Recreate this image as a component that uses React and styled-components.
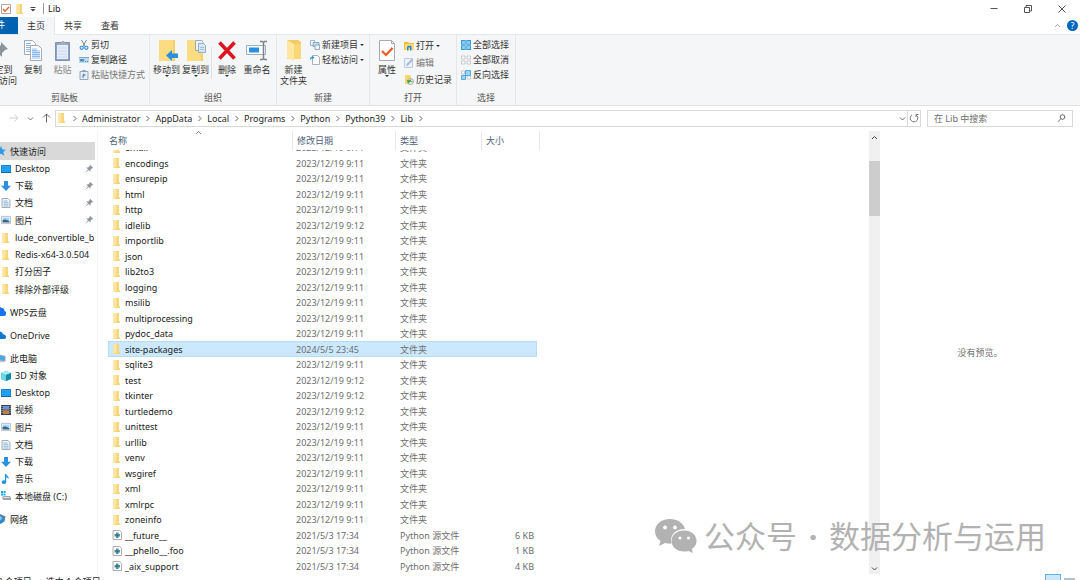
import React from "react";
import styled, { createGlobalStyle } from "styled-components";

const breadcrumbs = [
  "Administrator",
  "AppData",
  "Local",
  "Programs",
  "Python",
  "Python39",
  "Lib"
];

const folderNames = [
  "email",
  "encodings",
  "ensurepip",
  "html",
  "http",
  "idlelib",
  "importlib",
  "json",
  "lib2to3",
  "logging",
  "msilib",
  "multiprocessing",
  "pydoc_data",
  "site-packages",
  "sqlite3",
  "test",
  "tkinter",
  "turtledemo",
  "unittest",
  "urllib",
  "venv",
  "wsgiref",
  "xml",
  "xmlrpc",
  "zoneinfo"
];

const lateFolders = ["idlelib", "test", "tkinter", "turtledemo"];

const getFolderDate = name => {
  if (name === "site-packages") return "2024/5/5 23:45";
  return lateFolders.includes(name) ? "2023/12/19 9:12" : "2023/12/19 9:11";
};

const files = [
  ...folderNames.map(name => ({
    name,
    icon: "folder",
    date: getFolderDate(name),
    type: "文件夹",
    size: ""
  })),
  { name: "__future__", icon: "python", date: "2021/5/3 17:34", type: "Python 源文件", size: "6 KB" },
  { name: "__phello__.foo", icon: "python", date: "2021/5/3 17:34", type: "Python 源文件", size: "1 KB" },
  { name: "_aix_support", icon: "python", date: "2021/5/3 17:34", type: "Python 源文件", size: "4 KB" }
];

const navGroups = [
  {
    title: "快速访问",
    icon: "star",
    selected: true,
    items: [
      { name: "Desktop", icon: "desktop", pinned: true },
      { name: "下载", icon: "download", pinned: true },
      { name: "文档", icon: "document", pinned: true },
      { name: "图片", icon: "picture", pinned: true },
      { name: "lude_convertible_b", icon: "folder" },
      { name: "Redis-x64-3.0.504", icon: "folder" },
      { name: "打分因子", icon: "folder" },
      { name: "排除外部评级", icon: "folder" }
    ]
  },
  { title: "WPS云盘", icon: "wps", items: [] },
  { title: "OneDrive", icon: "onedrive", items: [] },
  {
    title: "此电脑",
    icon: "computer",
    items: [
      { name: "3D 对象", icon: "cube" },
      { name: "Desktop", icon: "desktop" },
      { name: "视频", icon: "video" },
      { name: "图片", icon: "picture" },
      { name: "文档", icon: "document" },
      { name: "下载", icon: "download" },
      { name: "音乐", icon: "music" },
      { name: "本地磁盘 (C:)", icon: "disk" }
    ]
  },
  { title: "网络", icon: "network", items: [] }
];

// 10x10 glyphs used in the tree, the list and the small ribbon buttons
const smallIcons = {
  folder: (
    <>
      <path d="M1.500 0h5.500v8l1 .5V10H1.500z" fill="#f7d57a" />
      <path d="M1.500 0h3v8.500L1.500 10z" fill="#fde6a2" />
    </>
  ),
  python: (
    <>
      <path d="M1 .5h6.500L9.500 2.500v7H1z" fill="#fff" stroke="#9a9a9a" strokeWidth=".8" />
      <path d="M4 2.500h2.500v1.500H8v2.500H6.500V8H4V6.500H2.500V4H4z" fill="#4a8fa8" />
      <path d="M4.500 4.500h1.500v1.500H4.500z" fill="#2d6482" />
    </>
  ),
  star: <path d="M5 0l1.500 3.500 3.500.2-2.700 2.300.9 3.700L5 7.700 1.800 9.700l.9-3.700L0 3.700l3.500-.2z" fill="#2f9be8" />,
  desktop: (
    <>
      <path d="M0 1h10v8H0z" fill="#1687d9" />
      <path d="M1 2h8v6H1z" fill="#21a1f3" />
      <path d="M0 8h10v1H0z" fill="#1468a8" />
    </>
  ),
  download: <path d="M3 0h4v4.800H10L5 10 0 4.800h3z" fill="#2e8ee0" />,
  document: (
    <>
      <path d="M1 .5h6L9 2.500v7H1z" fill="#eef4f8" stroke="#8b9aa5" strokeWidth=".8" />
      <path d="M2.500 3h4M2.500 4.700h5M2.500 6.300h5M2.500 8h5" stroke="#6aa5cf" strokeWidth=".7" />
    </>
  ),
  picture: (
    <>
      <path d="M.4 1.400h9.200v7.200H.4z" fill="#fff" stroke="#a9b3ba" strokeWidth=".8" />
      <path d="M1.500 2.500h7v3h-7z" fill="#a3d4f3" />
      <path d="M1.500 5l3-.5 4 1.500v1.500h-7z" fill="#31658a" />
    </>
  ),
  wps: <path d="M0 9V2.500a4 4 0 0 1 6-1.500c2 0 2.500 2 2.500 3 2.500.5 2 4.700-.5 5z" fill="#1672ed" />,
  onedrive: <path d="M0 9V2.500a4 3.500 0 0 1 7 1.700C10.500 4.500 11 8.500 8.500 9z" fill="#0f79cf" />,
  computer: (
    <>
      <path d="M0 1l9.500 2v5.500L0 7z" fill="#8fa6b5" />
      <path d="M0 2l8.500 1.600v3.600L0 6z" fill="#42aae9" />
      <path d="M2 8.200h6v1H2z" fill="#b4bcc2" />
    </>
  ),
  cube: (
    <>
      <path d="M5 0l5 2v6l-5 2-5-2V2z" fill="#27b1cb" />
      <path d="M5 0l5 2-5 2-5-2z" fill="#a5eef3" />
      <path d="M0 2l5 2v6L0 8z" fill="#6bd5e0" />
      <path d="M5 4l5-2v6l-5 2z" fill="#1389a6" />
    </>
  ),
  video: (
    <>
      <path d="M0 0h10v10H0z" fill="#3c4655" />
      <path d="M2 1h6v3.700H2z" fill="#6f94cb" />
      <path d="M2 5.300h6V9H2z" fill="#bd8048" />
      <path d="M1 1v8M9 1v8" stroke="#d6d9de" strokeDasharray="1 1" strokeWidth=".8" />
    </>
  ),
  music: <path d="M4 0h1.200c.3 2 3 2.300 2.500 5C7 3.700 6 3.500 5.200 3.300V8a2.200 1.800 0 1 1-1.200-1.500z" fill="#1f94e6" />,
  disk: (
    <>
      <path d="M0 0h2v2H0zM2.500 0h2v2h-2zM0 2.500h2v2H0zM2.500 2.500h2v2h-2z" fill="#18a7e8" />
      <path d="M1 6l2-1h6l1 2v2H2z" fill="#9ea5aa" />
      <path d="M2 6h6l1 1H3z" fill="#dde1e3" />
    </>
  ),
  network: (
    <>
      <path d="M4 0l5.500 2.500-1 5L4 10z" fill="#5b7fa0" />
      <circle cx="3.500" cy="5.500" r="4" fill="#2688ce" />
      <path d="M2 4l2.500-2 2 2-2 2.500z" fill="#82c9e9" />
    </>
  ),
  pin: <path d="M6 .7l3.300 3.300-1.300.3-1.500 1.500v2L4.700 6 1 9.300 4 5.300 2.200 3.500h2L5.700 2z" fill="#8d969e" />,
  scissors: (
    <>
      <path d="M2.500 0l3.700 6.500M7.500 0L3.800 6.500" stroke="#7d8790" strokeWidth="1" />
      <circle cx="2.700" cy="7.800" r="1.600" fill="none" stroke="#2c8dda" strokeWidth="1.100" />
      <circle cx="7.300" cy="7.800" r="1.600" fill="none" stroke="#2c8dda" strokeWidth="1.100" />
    </>
  ),
  path: (
    <>
      <path d="M0 2.500h10v5.500H0z" fill="#b7dcf4" />
      <path d="M0 2.500h10" stroke="#7aa9c8" />
      <path d="M1 4l1 2.500 1-2.500 1 2.500L5 4M6 6.500h1M8 6.500h1" fill="none" stroke="#376b94" strokeWidth=".8" />
    </>
  ),
  shortcut: (
    <>
      <path d="M1 1.500h8v8H1z" fill="#e5edf7" stroke="#8c9db8" strokeWidth=".9" />
      <path d="M3.500 0h3v2h-3z" fill="#8c9db8" />
      <path d="M4 8V5" stroke="#5e7fb5" fill="none" />
      <path d="M4 3.500l3 1.500-3 1.500z" fill="#5e7fb5" />
    </>
  ),
  newItem: (
    <>
      <path d="M.5.500h4v5h-4z" fill="#fff" stroke="#8fa0ab" strokeWidth=".8" />
      <path d="M3 2.500h6v4H3z" fill="#bfe2f5" stroke="#6c9cb9" strokeWidth=".8" />
      <path d="M5 5h4.500v4.500H5z" fill="#eef5f8" stroke="#879ba8" strokeWidth=".8" />
    </>
  ),
  easyAccess: (
    <>
      <path d="M2.500.5h5L9.500 2.500v7h-7z" fill="#fff" stroke="#949fa8" strokeWidth=".8" />
      <path d="M0 4.500c0-2 1-2.700 2.200-2.700V.7l2.300 1.800-2.300 1.800V3.200C1.300 3.200 1 3.600 1 4.500z" fill="#2c8fe0" />
    </>
  ),
  open: (
    <>
      <path d="M0 1h4l1 1h5v7H0z" fill="#f5bd3c" />
      <path d="M1 3h9v6H1z" fill="#fbdc79" />
      <path d="M3 9.500V6.500C3 5 4 4.700 5 4.700h2.500V9.500H6V6.500H4.500V9.500z" fill="#2b88cf" />
    </>
  ),
  edit: (
    <>
      <path d="M.5.500h8v9h-8z" fill="#edf1fa" stroke="#b4c1d7" strokeWidth=".8" />
      <path d="M2 8l.5-2L8 .5l1.500 1.300L4 7.500z" fill="#a7bad9" />
    </>
  ),
  history: (
    <>
      <path d="M1 0h5l1 1v8H1z" fill="#f8d66f" />
      <circle cx="6.500" cy="6.500" r="3" fill="#e8f2e5" stroke="#8f9f8f" strokeWidth=".8" />
      <path d="M2.500 5.500l2.500 3 1.500-3.500z" fill="#2aa335" />
      <path d="M6.500 4.500v2h2" stroke="#527b52" fill="none" strokeWidth=".8" />
    </>
  ),
  selectAll: (
    <>
      <path d="M0 0h4.700v4.700H0zM5.300 0H10v4.700H5.300zM0 5.300h4.700V10H0zM5.300 5.300H10V10H5.300z" fill="#319bdc" />
      <path d="M1 1h3v3H1zM6 1h3v3H6zM1 6h3v3H1zM6 6h3v3H6z" fill="#87caf4" />
    </>
  ),
  selectNone: (
    <path
      d="M.5 1h3.500v3H.5zM6 1h3.500v3H6zM.5 6h3.500v3H.5zM6 6h3.500v3H6z"
      fill="#fff"
      stroke="#b8bcc0"
      strokeWidth=".8"
    />
  ),
  invert: (
    <>
      <path d="M.5 1h3v3h-3zM6 6h3.500v3H6z" fill="#fff" stroke="#b8bcc0" strokeWidth=".8" />
      <path d="M4.500.5h5v5h-5zM.5 5.500h4v4h-4z" fill="#9bd3f7" stroke="#3a9de0" strokeWidth=".8" />
    </>
  )
};

// 22x22 glyphs for the tall ribbon buttons
const bigIcons = {
  pin: <path d="M13 2l7 7-3 1-3 3v4l-4-4-7 7 5-9-3-3h4l4-3z" fill="#8b949b" />,
  copy: (
    <>
      <path d="M2.500.5h8l3 3v11h-11z" fill="#fff" stroke="#a2aab2" />
      <path d="M4 3.500h5M4 5.500h7M4 7.500h7M4 9.500h7M4 11.500h7" stroke="#8fb8e8" />
      <path d="M8.500 5.500h8l3 3v12h-11z" fill="#fff" stroke="#a2aab2" />
      <path d="M10 8h5v2h3v9h-8z" fill="#c8dffa" />
      <path d="M10 10.500h5M10 12.500h8M10 14.500h8M10 16.500h8" stroke="#8fb8e8" />
    </>
  ),
  paste: (
    <>
      <path d="M3.500 2.500h14v18h-14z" fill="#8fa3c9" stroke="#8192b7" />
      <path d="M5 5h11v14H5z" fill="#e4edfa" />
      <path d="M7 3h2l1-2h2l1 2h2v2H7z" fill="#a6aeb8" />
      <path d="M6 8h9M6 11h9M6 14h9M6 17h9" stroke="#ccdaf0" />
    </>
  ),
  moveTo: (
    <>
      <path d="M3 0h16v21H3z" fill="#fbdc80" />
      <path d="M17 0h2v21h-2z" fill="#f4cf6b" />
      <path d="M10 15.500l6-5.500v3.500h6v4.500h-6V21z" fill="#2d8fdf" />
    </>
  ),
  copyTo: (
    <>
      <path d="M2 0h16v21H2z" fill="#fbdc80" />
      <path d="M16 14h2v7h-2z" fill="#f4cf6b" />
      <path d="M10.500.5h6l2 2v8h-8z" fill="#eaf3fd" stroke="#9aabbf" />
      <path d="M13.500 3.500h5l2 2v7h-7z" fill="#d6e6fa" stroke="#9aabbf" />
      <path d="M15 7.500h4M15 9.500h4" stroke="#9bbfea" />
    </>
  ),
  remove: <path d="M3.500 2.500l15 16M18.500 2.500l-15 16" stroke="#dc1420" strokeWidth="3.600" />,
  rename: (
    <>
      <path d="M.5 5.500h19v9H.5z" fill="#fff" stroke="#9fb2c0" />
      <path d="M3 7.500h10v5H3z" fill="#2c90e2" />
      <path d="M14 1.500h2.500l1 1 1-1H21M17.500 2v16M14 19.500h2.500l1-1 1 1H21" fill="none" stroke="#7b838a" strokeWidth="1.500" />
    </>
  ),
  newFolder: (
    <>
      <path d="M4 0h11l3 2v17H4z" fill="#f4cb61" />
      <path d="M4 0l7 4v17l-7-3z" fill="#ffe7a1" />
      <path d="M11 4h4l3-1v16h-7z" fill="#f9d777" />
    </>
  ),
  properties: (
    <>
      <path d="M3.500.5h12l3 3v17h-15z" fill="#fff" stroke="#aaa" />
      <path d="M15.500.5v3h3" fill="none" stroke="#aaa" />
      <path d="M6 11l4 4 6.500-7" fill="none" stroke="#ee5a24" strokeWidth="2.200" />
    </>
  )
};

const SmallIcon = ({ name }) => (
  <SmallSvg viewBox="0 0 10 10" aria-hidden="true">
    {smallIcons[name]}
  </SmallSvg>
);

const BigIcon = ({ name }) => (
  <BigSvg viewBox="0 0 22 22" aria-hidden="true">
    {bigIcons[name]}
  </BigSvg>
);

const chevrons = {
  right: "M3.500 2l2.500 2.500L3.500 7",
  down: "M2 3.500l2.500 2.500L7 3.500",
  up: "M2 6l2.500-2.500L7 6"
};

const Chevron = ({ dir, color = "#666" }) => (
  <ChevronSvg viewBox="0 0 9 9" aria-hidden="true">
    <path d={chevrons[dir]} fill="none" stroke={color} />
  </ChevronSvg>
);

const Big = ({ icon, lines, width, caret, muted }) => (
  <BigButton type="button" $width={width} $muted={muted}>
    <BigIcon name={icon} />
    <BigLabel>
      {lines.map(line => (
        <span key={line}>{line}</span>
      ))}
    </BigLabel>
    {caret && <Caret />}
  </BigButton>
);

const Small = ({ icon, label, caret, muted, tall }) => (
  <SmallButton type="button" $muted={muted} $tall={tall}>
    <SmallIcon name={icon} />
    {label}
    {caret && <Caret />}
  </SmallButton>
);

const TitleBar = () => (
  <TitleRow>
    <PlainButton type="button" aria-label="属性">
      <SmallSvg viewBox="0 0 10 10">
        <path d="M.5.500h9v9h-9z" fill="#fff" stroke="#b2a8a4" />
        <path d="M2 5l2 2.300L8 3" fill="none" stroke="#e8622e" strokeWidth="1.400" />
      </SmallSvg>
    </PlainButton>
    <PlainButton type="button" aria-label="新建文件夹">
      <SmallIcon name="folder" />
    </PlainButton>
    <PlainButton type="button" aria-label="自定义快速访问工具栏">
      <SmallSvg viewBox="0 0 10 10">
        <path d="M1.500 3.500h5" stroke="#444" />
        <path d="M1.500 5h5L4 7.500z" fill="#444" />
      </SmallSvg>
    </PlainButton>
    <Title>Lib</Title>
    <WindowButtons>
      <WindowButton type="button" aria-label="最小化">
        <SmallSvg viewBox="0 0 10 10">
          <path d="M1.500 4.500h7" stroke="#555" />
        </SmallSvg>
      </WindowButton>
      <WindowButton type="button" aria-label="还原">
        <SmallSvg viewBox="0 0 10 10">
          <path d="M1.500 3.500h5v5h-5zM3 3V1.500h5.500V7H7" fill="none" stroke="#555" />
        </SmallSvg>
      </WindowButton>
      <WindowButton type="button" aria-label="关闭">
        <SmallSvg viewBox="0 0 10 10">
          <path d="M1.500 1.500l7 7M8.500 1.500l-7 7" stroke="#555" />
        </SmallSvg>
      </WindowButton>
    </WindowButtons>
  </TitleRow>
);

const Tabs = () => (
  <TabRow>
    <FileTab type="button">文件</FileTab>
    <Tab type="button" $active>
      主页
    </Tab>
    <Tab type="button">共享</Tab>
    <Tab type="button">查看</Tab>
    <TabTools>
      <PlainButton type="button" aria-label="最小化功能区">
        <Chevron dir="up" color="#aaa" />
      </PlainButton>
      <HelpButton type="button" aria-label="帮助">
        ?
      </HelpButton>
    </TabTools>
  </TabRow>
);

const Ribbon = () => (
  <RibbonRow>
    <Group $width={170}>
      <GroupBody>
        <Big icon="pin" lines={["固定到", "快速访问"]} width={38} />
        <Big icon="copy" lines={["复制"]} width={30} />
        <Big icon="paste" lines={["粘贴"]} width={29} muted />
        <SmallColumn>
          <Small icon="scissors" label="剪切" />
          <Small icon="path" label="复制路径" />
          <Small icon="shortcut" label="粘贴快捷方式" muted />
        </SmallColumn>
      </GroupBody>
      <GroupLabel>剪贴板</GroupLabel>
    </Group>
    <Group $width={127}>
      <GroupBody>
        <Big icon="moveTo" lines={["移动到"]} width={29} caret />
        <Big icon="copyTo" lines={["复制到"]} width={29} caret />
        <Divider />
        <Big icon="remove" lines={["删除"]} width={30} caret />
        <Big icon="rename" lines={["重命名"]} width={30} />
      </GroupBody>
      <GroupLabel>组织</GroupLabel>
    </Group>
    <Group $width={93}>
      <GroupBody>
        <Big icon="newFolder" lines={["新建", "文件夹"]} width={29} />
        <SmallColumn>
          <Small icon="newItem" label="新建项目" caret />
          <Small icon="easyAccess" label="轻松访问" caret />
        </SmallColumn>
      </GroupBody>
      <GroupLabel>新建</GroupLabel>
    </Group>
    <Group $width={87}>
      <GroupBody>
        <Big icon="properties" lines={["属性"]} width={30} caret />
        <SmallColumn>
          <Small icon="open" label="打开" caret tall />
          <Small icon="edit" label="编辑" muted tall />
          <Small icon="history" label="历史记录" tall />
        </SmallColumn>
      </GroupBody>
      <GroupLabel>打开</GroupLabel>
    </Group>
    <Group $width={59}>
      <GroupBody>
        <SmallColumn>
          <Small icon="selectAll" label="全部选择" />
          <Small icon="selectNone" label="全部取消" />
          <Small icon="invert" label="反向选择" />
        </SmallColumn>
      </GroupBody>
      <GroupLabel>选择</GroupLabel>
    </Group>
  </RibbonRow>
);

const AddressBar = () => (
  <AddressRow>
    <HistoryButtons>
      <PlainButton type="button" aria-label="前进">
        <SmallSvg viewBox="0 0 10 10">
          <path d="M.5 5h8.500M5.500 1.500L9 5 5.500 8.500" fill="none" stroke="#d0d0d0" />
        </SmallSvg>
      </PlainButton>
      <PlainButton type="button" aria-label="最近浏览的位置">
        <Chevron dir="down" color="#777" />
      </PlainButton>
      <PlainButton type="button" aria-label="上移">
        <SmallSvg viewBox="0 0 10 10">
          <path d="M4.500 9.500V1M1 4.500L4.500 1 8 4.500" fill="none" stroke="#666" />
        </SmallSvg>
      </PlainButton>
    </HistoryButtons>
    <PathBox>
      <SmallIcon name="folder" />
      <CrumbArrow>
        <Chevron dir="right" />
      </CrumbArrow>
      {breadcrumbs.map(crumb => (
        <React.Fragment key={crumb}>
          <Crumb href="#">{crumb}</Crumb>
          <CrumbArrow>
            <Chevron dir="right" />
          </CrumbArrow>
        </React.Fragment>
      ))}
      <PathTools>
        <PlainButton type="button" aria-label="以前的位置">
          <Chevron dir="down" />
        </PlainButton>
        <RefreshButton type="button" aria-label="刷新">
          <SmallSvg viewBox="0 0 10 10">
            <path d="M3 1.800a3.800 3.800 0 1 0 4 0M7 4V1.500h2.500" fill="none" stroke="#777" />
          </SmallSvg>
        </RefreshButton>
      </PathTools>
    </PathBox>
    <SearchBox>
      <SearchInput type="text" placeholder="在 Lib 中搜索" aria-label="在 Lib 中搜索" />
      <SmallSvg viewBox="0 0 10 10">
        <circle cx="5.500" cy="4" r="2.300" fill="none" stroke="#666" />
        <path d="M3.800 5.800L1 8.700" stroke="#666" />
      </SmallSvg>
    </SearchBox>
  </AddressRow>
);

const Navigation = () => (
  <Nav>
    {navGroups.map(group => (
      <NavList key={group.title}>
        <NavItem>
          <NavLink href="#" $root $selected={group.selected}>
            <SmallIcon name={group.icon} />
            <NavText>{group.title}</NavText>
          </NavLink>
        </NavItem>
        {group.items.map(item => (
          <NavItem key={item.name}>
            <NavLink href="#">
              <SmallIcon name={item.icon} />
              <NavText>{item.name}</NavText>
              {item.pinned && <SmallIcon name="pin" />}
            </NavLink>
          </NavItem>
        ))}
      </NavList>
    ))}
  </Nav>
);

const FileList = () => (
  <FileTable>
    <FileHead>
      <HeadRow>
        <HeadCell scope="col" $first>
          名称
          <SortMark>
            <Chevron dir="up" color="#888" />
          </SortMark>
        </HeadCell>
        <HeadCell scope="col">修改日期</HeadCell>
        <HeadCell scope="col">类型</HeadCell>
        <HeadCell scope="col">大小</HeadCell>
      </HeadRow>
    </FileHead>
    <FileBody>
      {files.map(file => (
        <FileRow key={file.name} $selected={file.name === "site-packages"}>
          <NameCell>
            <SmallIcon name={file.icon} />
            {file.name}
          </NameCell>
          <Cell>{file.date}</Cell>
          <Cell>{file.type}</Cell>
          <SizeCell>{file.size}</SizeCell>
        </FileRow>
      ))}
    </FileBody>
  </FileTable>
);

const Watermark = () => (
  <WatermarkBox>
    <WechatSvg viewBox="0 0 42 34" aria-hidden="true">
      <path d="M15 0C6 0 0 5.500 0 12.500c0 4 2 7 5.500 9.500L4 27l6-3c2 .5 4 .8 6.500.6C14 16 21 10 30 10 28.500 4 22.500 0 15 0z" fill="#b2b2b2" />
      <path d="M29 11.500c-7 0-12.500 4.500-12.500 10.500S22 32.500 29 32.500c1.500 0 3-.2 4.500-.6L38 34l-1.200-4c2.800-2 4.700-4.600 4.700-8 0-6-5.500-10.500-12.500-10.500z" fill="#b2b2b2" />
      <g fill="#fff">
        <circle cx="10" cy="8.500" r="1.900" />
        <circle cx="20" cy="8.500" r="1.900" />
        <circle cx="25" cy="19" r="1.600" />
        <circle cx="33.500" cy="19" r="1.600" />
      </g>
    </WechatSvg>
    <span>公众号</span>
    <WatermarkDot>·</WatermarkDot>
    <span>数据分析与运用</span>
  </WatermarkBox>
);

const App = () => (
  <Shell>
    <GlobalStyle />
    <TitleBar />
    <Tabs />
    <Ribbon />
    <AddressBar />
    <Main>
      <Navigation />
      <FileList />
      <ScrollTrack>
        <ScrollButton type="button" aria-label="向上滚动">
          <Chevron dir="up" color="#444" />
        </ScrollButton>
        <ScrollThumb />
        <ScrollButton type="button" aria-label="向下滚动">
          <Chevron dir="down" color="#444" />
        </ScrollButton>
      </ScrollTrack>
      <Preview>没有预览。</Preview>
    </Main>
    <StatusBar>
      <span>208 个项目</span>
      <span>选中 1 个项目</span>
      <ViewButtons>
        <ViewButton type="button" aria-label="详细信息" $active />
        <ViewButton type="button" aria-label="大图标" />
      </ViewButtons>
    </StatusBar>
    <Watermark />
  </Shell>
);

export default App;

const GlobalStyle = createGlobalStyle`
  * {
    box-sizing: border-box;
  }
  body {
    margin: 0;
    overflow: hidden;
    background: #fff;
    color: #1a1a1a;
    font-family: "Noto Sans", "Noto Sans CJK SC", sans-serif;
    font-size: 9px;
    line-height: 11px;
  }
  button, input {
    margin: 0;
    padding: 0;
    border: 0;
    background: none;
    color: inherit;
    font: inherit;
  }
  a {
    color: inherit;
    text-decoration: none;
  }
`;

// the window hangs 20px over the left edge of the screen
const Shell = styled.div`
  position: relative;
  display: flex;
  flex-direction: column;
  height: 100vh;
  margin-left: -20px;
  white-space: nowrap;
`;

const SmallSvg = styled.svg`
  flex: none;
  display: block;
  width: 10px;
  height: 10px;
`;

const BigSvg = styled.svg`
  flex: none;
  width: 22px;
  height: 22px;
`;

const ChevronSvg = styled.svg`
  flex: none;
  display: block;
  width: 9px;
  height: 9px;
`;

const PlainButton = styled.button`
  display: flex;
  align-items: center;
  justify-content: center;
`;

const TitleRow = styled.header`
  flex: none;
  display: flex;
  align-items: center;
  gap: 4px;
  height: 17px;
  padding-left: 21px;
`;

const Title = styled.h1`
  margin: 0;
  padding-left: 4px;
  border-left: 1px solid #999;
  font-size: 9px;
  font-weight: 400;
`;

const WindowButtons = styled.div`
  display: flex;
  margin-left: auto;
  padding-right: 1px;
`;

const WindowButton = styled(PlainButton)`
  width: 34px;
  height: 17px;
`;

const TabRow = styled.div`
  flex: none;
  display: flex;
  height: 18px;
  border-bottom: 1px solid #e3e5e7;
`;

const FileTab = styled.button`
  width: 38px;
  padding: 0 0 2px 7px;
  background: #0063b1;
  color: #fff;
  text-align: left;
`;

const Tab = styled.button`
  height: 18px;
  width: 37px;
  padding-bottom: 2px;
  border-right: 1px solid ${props => (props.$active ? "#e3e5e7" : "transparent")};
  background: ${props => (props.$active ? "#f5f6f7" : "transparent")};
  color: #333;
`;

const TabTools = styled.div`
  display: flex;
  align-items: center;
  gap: 5px;
  margin-left: auto;
  padding-right: 2px;
`;

const HelpButton = styled.button`
  width: 11px;
  height: 11px;
  border-radius: 50%;
  background: #0067c0;
  color: #fff;
`;

const RibbonRow = styled.div`
  flex: none;
  display: flex;
  height: 71px;
  border-bottom: 1px solid #dfe1e3;
  background: #f5f6f7;
`;

const Group = styled.section`
  display: flex;
  flex-direction: column;
  width: ${props => props.$width}px;
  padding: 1px 0;
  border-right: 1px solid #e6e7e9;
`;

const GroupBody = styled.div`
  flex: 1;
  display: flex;
  padding-left: 2px;

  ${Group}:first-child & {
    padding-left: 0;
  }
`;

const GroupLabel = styled.div`
  color: #555;
  line-height: 12px;
  text-align: center;
`;

const BigButton = styled.button`
  flex: none;
  display: flex;
  flex-direction: column;
  align-items: center;
  width: ${props => props.$width}px;
  padding-top: 4px;
  color: ${props => (props.$muted ? "#8a8a8a" : "#333")};
`;

const BigLabel = styled.span`
  display: flex;
  flex-direction: column;
  align-items: center;
  padding-top: 2px;
`;

const Caret = styled.i`
  border: 2px solid transparent;
  border-top-color: #333;
  border-bottom: 0;
`;

const Divider = styled.div`
  width: 1px;
  height: 32px;
  margin: 11px 0 0 1px;
  background: #dfe0e2;
`;

const SmallColumn = styled.div`
  display: flex;
  flex-direction: column;
  align-items: flex-start;
  padding: 1px 0 0 2px;
`;

const SmallButton = styled.button`
  display: flex;
  align-items: center;
  gap: 2px;
  height: ${props => (props.$tall ? 17 : 15)}px;
  color: ${props => (props.$muted ? "#777" : "#333")};
`;

const AddressRow = styled.div`
  flex: none;
  display: flex;
  align-items: center;
  height: 24px;
  padding: 0 7px 0 29px;
`;

const HistoryButtons = styled.div`
  display: flex;
  gap: 7px;
  width: 46px;
`;

const PathBox = styled.div`
  flex: 1;
  display: flex;
  align-items: center;
  height: 17px;
  padding-left: 1px;
  border: 1px solid #d9d9d9;
`;

const Crumb = styled.a`
  color: #222;
`;

const CrumbArrow = styled.span`
  display: flex;
  justify-content: center;
  width: 15px;
`;

const PathTools = styled.div`
  display: flex;
  align-self: stretch;
  margin-left: auto;
`;

const RefreshButton = styled(PlainButton)`
  width: 13px;
  border-left: 1px solid #d9d9d9;
`;

const SearchBox = styled.div`
  display: flex;
  align-items: center;
  width: 146px;
  height: 17px;
  margin-left: 6px;
  padding: 0 5px 0 6px;
  border: 1px solid #d9d9d9;
`;

const SearchInput = styled.input`
  flex: 1;
  min-width: 0;
  outline: none;

  &::placeholder {
    color: #6d6d6d;
    opacity: 1;
  }
`;

const Main = styled.main`
  flex: 1;
  display: flex;
  min-height: 0;
  padding-top: 1px;
`;

const Nav = styled.nav`
  flex: none;
  width: 118px;
  padding: 11px 2px 0 0;
  border-right: 1px solid #f3f3f3;
  overflow: hidden;
`;

const NavList = styled.ul`
  margin: 0 0 5px;
  padding: 0;
  list-style: none;
`;

const NavItem = styled.li`
  height: 17px;

  &:nth-child(4n + 1) {
    height: 18px;
  }
`;

const NavLink = styled.a`
  display: flex;
  align-items: center;
  gap: 4px;
  height: 100%;
  padding-left: ${props => (props.$root ? 16 : 21)}px;
  background: ${props => (props.$selected ? "#d9d9d9" : "transparent")};

  svg:last-child {
    margin-right: 1px;
  }
`;

const NavText = styled.span`
  flex: 1;
`;

const FileTable = styled.table`
  flex: 1;
  display: flex;
  flex-direction: column;
  min-width: 0;
  padding-left: 10px;
`;

const FileHead = styled.thead`
  flex: none;
  display: block;
`;

const HeadRow = styled.tr`
  display: grid;
  grid-template-columns: 185px 103px 86px 58px;
  height: 19px;
`;

const HeadCell = styled.th`
  position: relative;
  padding: 0 0 0 ${props => (props.$first ? 1 : 4)}px;
  border-right: 1px solid #e8e8e8;
  color: #4c607a;
  font-weight: 400;
  line-height: 19px;
  text-align: left;
`;

const SortMark = styled.span`
  position: absolute;
  top: -3px;
  right: 89px;
`;

// rows are held at the foot of the pane, so the top one is cut by the header
const FileBody = styled.tbody`
  flex: 1;
  display: flex;
  flex-direction: column;
  justify-content: flex-end;
  min-height: 0;
  overflow: hidden;
`;

const FileRow = styled.tr`
  flex: none;
  display: grid;
  grid-template-columns: 184px 104px 86px 55px;
  align-items: center;
  width: 429px;
  height: 15px;
  background: ${props => (props.$selected ? "#cce8ff" : "transparent")};
  outline: ${props => (props.$selected ? "1px solid #b4dcfb" : "0")};
  outline-offset: -1px;

  &:nth-child(even) {
    height: 16px;
  }
`;

const Cell = styled.td`
  padding: 0 0 0 4px;
  color: #6d6d6d;
`;

const NameCell = styled(Cell)`
  display: flex;
  align-items: center;
  gap: 3px;
  color: #1a1a1a;
`;

const SizeCell = styled(Cell)`
  padding: 0 3px 0 0;
  text-align: right;
`;

const ScrollTrack = styled.div`
  flex: none;
  display: flex;
  flex-direction: column;
  width: 11px;
  background: #f0f0f0;
`;

const ScrollButton = styled(PlainButton)`
  height: 12px;

  &:last-child {
    margin-top: auto;
  }
`;

const ScrollThumb = styled.div`
  height: 55px;
  margin-top: 18px;
  background: #cdcdcd;
`;

const Preview = styled.aside`
  flex: none;
  display: flex;
  align-items: center;
  justify-content: center;
  width: 200px;
  color: #6d6d6d;
`;

const StatusBar = styled.footer`
  flex: none;
  display: flex;
  gap: 14px;
  height: 6px;
  padding: 0 5px 0 7px;
  line-height: 16px;
  overflow: hidden;
`;

const ViewButtons = styled.div`
  display: flex;
  gap: 3px;
  margin-left: auto;
`;

const ViewButton = styled.button`
  width: ${props => (props.$active ? 16 : 11)}px;
  height: 16px;
  margin-top: ${props => (props.$active ? 0 : 4)}px;
  border: 1px solid ${props => (props.$active ? "#5cb8e8" : "#b8bcc4")};
  background: ${props => (props.$active ? "#cce8f8" : "#a9c4ee")};
`;

const WatermarkBox = styled.div`
  position: absolute;
  right: 34px;
  bottom: 26px;
  display: flex;
  align-items: center;
  color: #b2b2b2;
  font-size: 31px;
  line-height: 36px;
  pointer-events: none;
`;

const WechatSvg = styled.svg`
  width: 42px;
  height: 34px;
  margin-right: 7px;
`;

const WatermarkDot = styled.span`
  width: 32px;
  text-align: center;
  font-weight: 700;
`;
